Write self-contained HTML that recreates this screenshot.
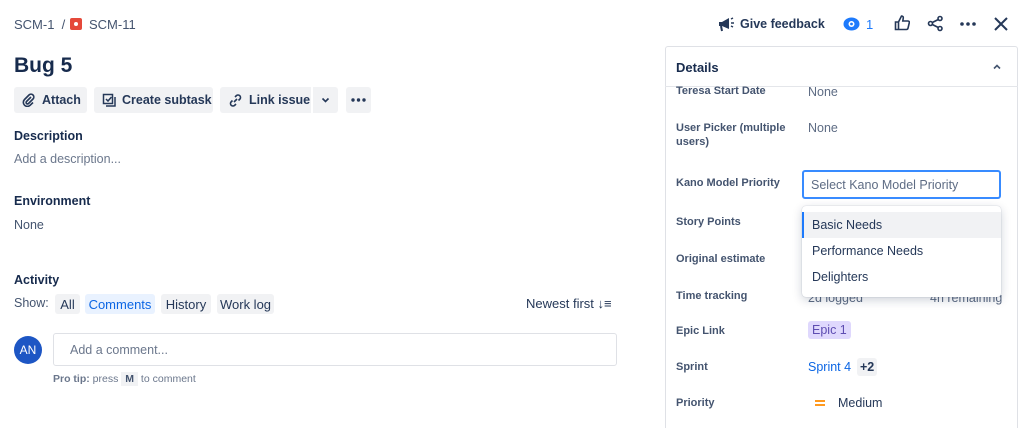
<!DOCTYPE html>
<html><head><meta charset="utf-8"><style>
*{margin:0;padding:0;box-sizing:border-box}
html,body{width:1024px;height:428px;overflow:hidden}
body{background:#fff;font-family:"Liberation Sans",sans-serif;color:#172b4d;position:relative;font-size:13px}
.a{position:absolute;white-space:nowrap}
.btn{position:absolute;top:87px;height:26px;background:#f1f2f4;border-radius:3px;font-size:12.5px;font-weight:bold;color:#253858;display:flex;align-items:center;padding-left:8px;white-space:nowrap}
.lbl{position:absolute;left:676px;font-size:11px;font-weight:bold;color:#44546f}
.val{position:absolute;left:808px;font-size:12.5px;color:#5e6c84}
.tab{position:absolute;top:294px;height:20px;background:#f1f2f4;border-radius:3px;font-size:13px;display:flex;align-items:center;justify-content:center;color:#253858}
</style></head><body>
<div class="a" style="left:14px;top:17px;font-size:13px;color:#44546f">SCM-1 &nbsp;/</div>
<div class="a" style="left:70px;top:18px;width:12px;height:12px;background:#e5493a;border-radius:2px"><div style="position:absolute;left:4px;top:4px;width:4px;height:4px;background:#fff;border-radius:50%"></div></div>
<div class="a" style="left:89px;top:17px;font-size:13px;color:#44546f">SCM-11</div>
<div class="a" style="left:14px;top:54px;font-size:21px;font-weight:bold">Bug 5</div>
<div class="btn" style="left:14px;width:73px"><svg width="14" height="14" viewBox="0 0 14 14" fill="none" stroke="#253858" stroke-width="1.6"><path d="M9 4L4.5 8.5a1.4 1.4 0 0 0 2 2L11 6a2.8 2.8 0 0 0-4-4L2.5 6.5a4 4 0 0 0 5.7 5.7L11 9.5"/></svg><span style="margin-left:6px">Attach</span></div>
<div class="btn" style="left:94px;width:119px"><svg width="15" height="15" viewBox="0 0 15 15" fill="none" stroke="#253858" stroke-width="1.5"><rect x="1.5" y="1.5" width="9" height="9"/><path d="M4 6l2 2 3.5-4M4 13h9V4"/></svg><span style="margin-left:5px">Create subtask</span></div>
<div class="btn" style="left:220px;width:91px;border-radius:3px 0 0 3px"><svg width="15" height="15" viewBox="0 0 15 15" fill="none" stroke="#253858" stroke-width="1.6"><path d="M6 9l3-3M7 4l1.5-1.5a2.5 2.5 0 0 1 3.5 3.5L10.5 7.5M8 11l-1.5 1.5a2.5 2.5 0 0 1-3.5-3.5L4.5 7.5"/></svg><span style="margin-left:6px">Link issue</span></div>
<div class="btn" style="left:313px;width:25px;border-radius:0 3px 3px 0;padding-left:8px"><svg width="9" height="6" viewBox="0 0 9 6"><path d="M1.5 1.5l3 3 3-3" stroke="#253858" stroke-width="1.6" fill="none"/></svg></div>
<div class="btn" style="left:346px;width:25px;padding-left:5px"><svg width="15" height="4" viewBox="0 0 15 4" fill="#253858"><circle cx="2" cy="2" r="1.7"/><circle cx="7.5" cy="2" r="1.7"/><circle cx="13" cy="2" r="1.7"/></svg></div>
<div class="a" style="left:14px;top:129px;font-size:12.5px;font-weight:bold">Description</div>
<div class="a" style="left:14px;top:152px;font-size:12.5px;color:#6b778c">Add a description...</div>
<div class="a" style="left:14px;top:194px;font-size:12.5px;font-weight:bold">Environment</div>
<div class="a" style="left:14px;top:218px;font-size:12.5px;color:#44546f">None</div>
<div class="a" style="left:14px;top:273px;font-size:12.5px;font-weight:bold">Activity</div>
<div class="a" style="left:14px;top:296px;font-size:12.5px;color:#44546f">Show:</div>
<div class="tab" style="left:55px;width:25px">All</div>
<div class="tab" style="left:85px;width:70px;background:#e9f2ff;color:#0c66e4">Comments</div>
<div class="tab" style="left:161px;width:50px">History</div>
<div class="tab" style="left:217px;width:57px">Work log</div>
<div class="a" style="left:526px;top:296px;font-size:13px;color:#253858">Newest first ↓≡</div>
<div class="a" style="left:14px;top:336px;width:28px;height:28px;border-radius:50%;background:#1d56c4;color:#fff;font-size:12px;display:flex;align-items:center;justify-content:center">AN</div>
<div class="a" style="left:53px;top:333px;width:564px;height:33px;border:1px solid #dfe1e6;border-radius:3px;padding:9px 0 0 16px;font-size:12.5px;color:#6b778c">Add a comment...</div>
<div class="a" style="left:53px;top:373px;font-size:10.5px;color:#6b778c"><b>Pro tip:</b> press <span style="background:#f1f2f4;padding:1px 4px;font-weight:bold;color:#44546f">M</span> to comment</div>
<svg class="a" style="left:717px;top:16px" width="18" height="16" viewBox="0 0 18 16"><path d="M2 6h3l7-4v11l-7-3H2z" fill="#253858"/><path d="M4 10l1 5" stroke="#253858" stroke-width="2"/><path d="M14 3l2-1M14 7h3M14 10l2 1" stroke="#253858" stroke-width="1.5"/></svg>
<div class="a" style="left:740px;top:17px;font-size:12.5px;font-weight:bold;color:#253858">Give feedback</div>
<svg class="a" style="left:843px;top:17px" width="17" height="14" viewBox="0 0 17 14"><ellipse cx="8.5" cy="7" rx="8" ry="6.5" fill="#1d7afc"/><circle cx="8.5" cy="7" r="3" fill="#fff"/><circle cx="8.5" cy="7" r="1.4" fill="#1d7afc"/></svg>
<div class="a" style="left:866px;top:17px;font-size:13px;color:#1d7afc">1</div>
<svg class="a" style="left:894px;top:15px" width="16" height="16" viewBox="0 0 16 16" fill="none" stroke="#253858" stroke-width="1.6"><path d="M1.5 7h3v7.5h-3zM4.5 7l3-6c1.5 0 2 1 1.7 2.5L8.8 6H14c1 0 1.5.8 1.3 1.7l-1.3 5.5c-.2.8-.8 1.3-1.6 1.3H4.5"/></svg>
<svg class="a" style="left:927px;top:15px" width="17" height="17" viewBox="0 0 17 17" fill="none" stroke="#253858" stroke-width="1.6"><circle cx="13" cy="3.5" r="2"/><circle cx="3.5" cy="8.5" r="2"/><circle cx="13" cy="13.5" r="2"/><path d="M5.3 7.5l6-3M5.3 9.5l6 3"/></svg>
<svg class="a" style="left:960px;top:22px" width="16" height="4" viewBox="0 0 16 4" fill="#253858"><circle cx="2" cy="2" r="1.8"/><circle cx="8" cy="2" r="1.8"/><circle cx="14" cy="2" r="1.8"/></svg>
<svg class="a" style="left:994px;top:17px" width="14" height="14" viewBox="0 0 14 14"><path d="M1 1l12 12M13 1L1 13" stroke="#253858" stroke-width="2"/></svg>
<div class="a" style="left:665px;top:46px;width:353px;height:400px;border:1px solid #dfe1e6;border-radius:3px"></div>
<div class="a" style="left:665px;top:86px;width:353px;height:1px;background:#e4e6ea"></div>
<div class="a" style="left:676px;top:60px;font-size:13px;font-weight:bold">Details</div>
<svg class="a" style="left:993px;top:64px" width="8" height="6" viewBox="0 0 8 6"><path d="M1 4.5l3-3 3 3" stroke="#44546f" stroke-width="1.6" fill="none"/></svg>
<div class="lbl" style="top:85px">Teresa Start Date</div><div class="val" style="top:85px">None</div>
<div class="lbl" style="top:121px;line-height:14px">User Picker (multiple<br>users)</div><div class="val" style="top:121px">None</div>
<div class="lbl" style="top:177px">Kano Model Priority</div>
<div class="a" style="left:802px;top:170px;width:199px;height:29px;border:2px solid #388bff;border-radius:3px;padding:6px 0 0 7px;font-size:12.5px;color:#5e6c84">Select Kano Model Priority</div>
<div class="lbl" style="top:216px">Story Points</div>
<div class="lbl" style="top:253px">Original estimate</div>
<div class="lbl" style="top:290px">Time tracking</div>
<div class="val" style="top:291px">2d logged</div><div class="val" style="top:291px;left:930px">4h remaining</div>
<div class="lbl" style="top:325px">Epic Link</div>
<div class="a" style="left:808px;top:321px;background:#dfd8fd;color:#5e4db2;border-radius:3px;padding:2px 4px;font-size:12.5px">Epic 1</div>
<div class="lbl" style="top:361px">Sprint</div>
<div class="a" style="left:808px;top:360px;font-size:12.5px;color:#0c66e4">Sprint 4</div>
<div class="a" style="left:857px;top:358px;background:#f1f2f4;border-radius:3px;padding:2px 3px;font-size:12.5px;font-weight:bold;color:#253858">+2</div>
<div class="lbl" style="top:397px">Priority</div>
<div class="a" style="left:815px;top:400px;width:10px;height:2px;background:#ff991f;box-shadow:0 4px 0 #ff991f"></div>
<div class="a" style="left:838px;top:396px;font-size:12.5px;color:#253858">Medium</div>
<div class="a" style="left:802px;top:206px;width:199px;height:91px;background:#fff;border-radius:4px;box-shadow:0 3px 10px rgba(9,30,66,.2),0 0 1px rgba(9,30,66,.3)">
<div style="position:absolute;left:0;top:6px;width:199px;height:26px;background:#f1f2f4;border-left:2px solid #1d7afc"></div>
<div style="position:absolute;left:10px;top:12px;font-size:12.5px;color:#253858">Basic Needs</div>
<div style="position:absolute;left:10px;top:38px;font-size:12.5px;color:#253858">Performance Needs</div>
<div style="position:absolute;left:10px;top:64px;font-size:12.5px;color:#253858">Delighters</div>
</div>
</body></html>
